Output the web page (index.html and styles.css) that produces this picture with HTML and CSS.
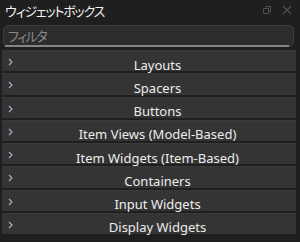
FILE: index.html
```
<!DOCTYPE html>
<html lang="ja">
<head>
<meta charset="utf-8">
<link rel="stylesheet" href="styles.css">
</head>
<body>
<div class="panel">
  <div class="titlebar">
    <span class="title">ウィジェットボックス</span>
    <span class="tools">
      <svg class="ico" width="10" height="10" viewBox="0 0 10 10"><path d="M3.5 1.5h5v5h-2M1.5 3.5h5v5h-5z" fill="none" stroke="#505050" stroke-width="1"/></svg>
      <svg class="ico close" width="10" height="10" viewBox="0 0 10 10"><path d="M1 1l8 8M9 1l-8 8" stroke="#505050" stroke-width="1.3"/></svg>
    </span>
  </div>
  <div class="filter">
    <span class="placeholder">フィルタ</span>
  </div>
  <div class="list">
    <div class="row"><svg class="chev" width="5" height="8" viewBox="0 0 5 8"><path d="M1 1l3 3-3 3" fill="none" stroke="#9fb0c8" stroke-width="1.2"/></svg><span class="label">Layouts</span></div>
    <div class="row"><svg class="chev" width="5" height="8" viewBox="0 0 5 8"><path d="M1 1l3 3-3 3" fill="none" stroke="#9fb0c8" stroke-width="1.2"/></svg><span class="label">Spacers</span></div>
    <div class="row"><svg class="chev" width="5" height="8" viewBox="0 0 5 8"><path d="M1 1l3 3-3 3" fill="none" stroke="#9fb0c8" stroke-width="1.2"/></svg><span class="label">Buttons</span></div>
    <div class="row"><svg class="chev" width="5" height="8" viewBox="0 0 5 8"><path d="M1 1l3 3-3 3" fill="none" stroke="#9fb0c8" stroke-width="1.2"/></svg><span class="label">Item Views (Model-Based)</span></div>
    <div class="row"><svg class="chev" width="5" height="8" viewBox="0 0 5 8"><path d="M1 1l3 3-3 3" fill="none" stroke="#9fb0c8" stroke-width="1.2"/></svg><span class="label">Item Widgets (Item-Based)</span></div>
    <div class="row"><svg class="chev" width="5" height="8" viewBox="0 0 5 8"><path d="M1 1l3 3-3 3" fill="none" stroke="#9fb0c8" stroke-width="1.2"/></svg><span class="label">Containers</span></div>
    <div class="row"><svg class="chev" width="5" height="8" viewBox="0 0 5 8"><path d="M1 1l3 3-3 3" fill="none" stroke="#9fb0c8" stroke-width="1.2"/></svg><span class="label">Input Widgets</span></div>
    <div class="row"><svg class="chev" width="5" height="8" viewBox="0 0 5 8"><path d="M1 1l3 3-3 3" fill="none" stroke="#9fb0c8" stroke-width="1.2"/></svg><span class="label">Display Widgets</span></div>
  </div>
</div>
</body>
</html>
```
FILE: styles.css
```
html, body {
  margin: 0;
  padding: 0;
  background: #1f1f1f;
}
.panel {
  width: 300px;
  height: 242px;
  overflow: hidden;
  font-family: "Noto Sans", "Noto Sans CJK JP", sans-serif;
}
.titlebar {
  height: 24px;
  display: flex;
  align-items: center;
  justify-content: space-between;
  padding: 0 8px 0 5px;
}
.title {
  font-family: "Noto Sans CJK JP", sans-serif;
  font-feature-settings: "palt";
  font-size: 13px;
  letter-spacing: -1.2px;
  color: #f2f2f2;
  margin-top: -3px;
}
.tools {
  display: flex;
  gap: 10px;
  align-items: center;
  margin-top: -4px;
}
.filter {
  position: relative;
  margin: 1px 6px 0 3px;
  height: 22px;
  background: #2d2d2d;
  border: 1px solid #3c3c3c;
  border-radius: 5px;
  display: flex;
  align-items: center;
  padding-left: 4px;
  box-sizing: border-box;
}
.filter::after {
  content: "";
  position: absolute;
  left: 1px;
  right: 4px;
  bottom: -1px;
  height: 2px;
  background: #858585;
}
.placeholder {
  font-family: "Noto Sans CJK JP", sans-serif;
  font-feature-settings: "palt";
  font-size: 13px;
  letter-spacing: -1.5px;
  color: #8a8a8a;
  margin-top: -1px;
}
.list {
  margin: 3px 4px 0 2px;
  display: flex;
  flex-direction: column;
  gap: 2px;
}
.row {
  height: 21.25px;
  background: #343434;
  display: flex;
  align-items: flex-start;
  border-top: 1px solid #3a3a3a;
  box-sizing: border-box;
  padding-left: 6px;
}
.chev {
  flex: none;
  margin-top: 7px;
}
.label {
  flex: 1;
  text-align: center;
  font-size: 13px;
  line-height: 13px;
  color: #ececec;
  padding-top: 7.5px;
  padding-left: 6px;
}
```
